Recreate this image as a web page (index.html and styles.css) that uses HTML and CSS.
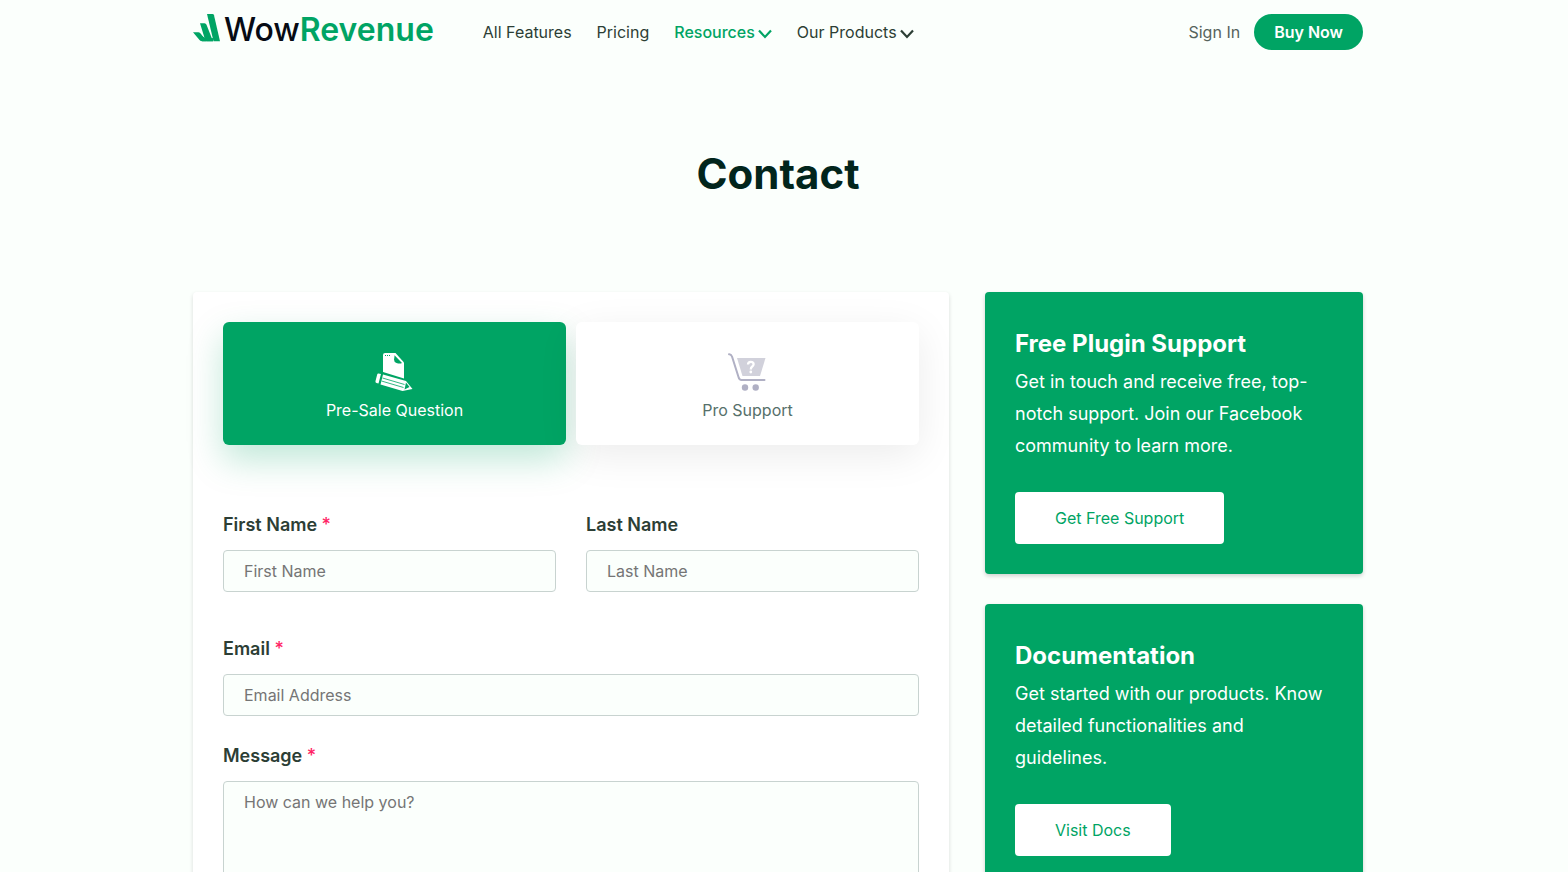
FILE: index.html
```html
<!DOCTYPE html>
<html lang="en">
<head>
  <meta charset="UTF-8" />
  <meta name="viewport" content="width=device-width, initial-scale=1.0">
  <title>Contact - WowRevenue</title>

  <link rel="stylesheet" href="styles.css">
</head>

<body>

  <header class="container header">
    <a class="logo" href="#">
      <svg class="logo-mark" width="28" height="28" viewBox="0 0 28 28" fill="#00a464" aria-hidden="true">
        <path d="M0 18.3H5.5Q7 18.4 8 20L13.5 27.3H9.5Q7.5 27.3 6.5 26Z" />
        <path d="M7 9.2H11.5Q13 9.2 13.5 10.7L20 27.3H14Q12.5 27 12 25.5Z" />
        <path d="M14 0H19.5Q20.7 0 21 1.2L27 27.3H20.5Z" />
        <path d="M9 22L14 25L20 24V27.3H9Z" />
      </svg>
      <span class="logo-text">Wow<b>Revenue</b></span>
    </a>

    <nav class="nav">
      <a href="#">All Features</a>
      <a href="#">Pricing</a>
      <a href="#" class="active">Resources
        <svg width="14" height="10" viewBox="0 0 14 10" fill="none" stroke="currentColor" stroke-width="2.2"><path d="M1 1.5L7 8L13 1.5" /></svg>
      </a>
      <a href="#">Our Products
        <svg width="14" height="10" viewBox="0 0 14 10" fill="none" stroke="currentColor" stroke-width="2.2"><path d="M1 1.5L7 8L13 1.5" /></svg>
      </a>
    </nav>

    <div class="account">
      <a href="#" class="sign-in">Sign In</a>
      <a href="#" class="buy-now">Buy Now</a>
    </div>
  </header>

  <h1>Contact</h1>

  <main class="container content">
    <section class="form-card">
      <div class="tabs">
        <button type="button" class="tab tab-active">
          <svg width="40" height="38" viewBox="0 0 40 38" aria-hidden="true">
            <path fill="#fff" d="M8 2Q8 0 10 0H20.5L29 9.5V25.5L8 19Z" />
            <path fill="#00a464" d="M19.5 3.5Q18.8 2.2 20 2.7L27 10Q25 11 21.5 10Q19 9.2 19 6.5Z" />
            <path fill="#00a464" d="M10 2h1v1h-1zM12 2h1v1h-1zM14 2h1v1h-1z" />
            <path fill="#fff" d="M3.5 20.5L6 21L3.5 30.5L1.5 30Q0 29.5 .5 28L2.2 21.5Q2.5 20.3 3.5 20.5ZM8 21.5L31 28L37.5 36L27.5 38L5.5 31.5Z" />
            <path fill="none" stroke="#00a464" stroke-width="0.8" d="M7.5 25L29.5 31.5M6.5 28L28.5 34.5" />
            <path fill="#00a464" d="M31 29.5L34.5 34L29.5 36.5Z" />
          </svg>
          <span>Pre-Sale Question</span>
        </button>
        <button type="button" class="tab">
          <svg width="40" height="38" viewBox="0 0 40 38" aria-hidden="true">
            <path fill="#d1d1db" d="M9 5H37.5L32 23H14.5Z" />
            <path fill="none" stroke="#b0b0c4" stroke-width="2" stroke-linecap="round" stroke-linejoin="round" d="M1 1.2Q3 1 4 3.5L10.5 24Q11.3 27 13.5 27H36.5" />
            <path fill="none" stroke="#fff" stroke-width="2.3" d="M20 11.5Q20 8.8 22.8 8.8Q25.6 8.8 25.6 11.2Q25.6 12.6 24 13.7Q22.8 14.5 22.8 16.5" />
            <circle cx="22.8" cy="19" r="1.4" fill="#fff" />
            <circle cx="17" cy="34.5" r="3.2" fill="#b0b0c4" />
            <circle cx="27.7" cy="34.5" r="3.2" fill="#b0b0c4" />
          </svg>
          <span>Pro Support</span>
        </button>
      </div>

      <form class="contact-form">
        <div class="name-row">
          <div class="field">
            <label for="firstName">First Name <span class="required">*</span></label>
            <input type="text" id="firstName" placeholder="First Name">
          </div>
          <div class="field">
            <label for="lastName">Last Name</label>
            <input type="text" id="lastName" placeholder="Last Name">
          </div>
        </div>
        <div class="field">
          <label for="email">Email <span class="required">*</span></label>
          <input type="email" id="email" placeholder="Email Address">
        </div>
        <div class="field">
          <label for="message">Message <span class="required">*</span></label>
          <textarea id="message" rows="6" placeholder="How can we help you?"></textarea>
        </div>
      </form>
    </section>

    <aside class="sidebar">
      <div class="help-card">
        <h2>Free Plugin Support</h2>
        <p>Get in touch and receive free, top-notch support. Join our Facebook community to learn more.</p>
        <a href="#" class="help-button">Get Free Support</a>
      </div>
      <div class="help-card">
        <h2>Documentation</h2>
        <p>Get started with our products. Know detailed functionalities and guidelines.</p>
        <a href="#" class="help-button">Visit Docs</a>
      </div>
    </aside>
  </main>

</body>
</html>
```
FILE: styles.css
```css
* {
  box-sizing: border-box;
}

body {
  background-color: #fbfffc;
  margin: 0;
  padding-right: 12px;
  font-family: Inter, "Liberation Sans", sans-serif;
  font-size: 16px;
  color: #2c3e35;
}

a {
  color: inherit;
  text-decoration: none;
}

.container {
  max-width: 1170px;
  margin: 0 auto;
}

.header {
  display: flex;
  align-items: center;
  height: 64px;
}

.logo {
  display: flex;
  align-items: center;
  gap: 3px;
  margin-right: 49px;
  padding-bottom: 8px;
}

.logo-text {
  padding-top: 4px;
  font-size: 32px;
  line-height: 40px;
  font-weight: 500;
  color: #070b14;
}

.logo-text b {
  font-weight: 600;
  color: #00a464;
}

.nav {
  display: flex;
  gap: 25px;
  line-height: 24px;
}

.nav a {
  display: flex;
  align-items: center;
  gap: 3px;
}

.nav svg {
  margin-top: 3px;
}

.nav .active {
  color: #00a464;
  font-weight: 500;
}

.account {
  display: flex;
  align-items: center;
  gap: 14px;
  margin-left: auto;
}

.sign-in {
  color: #56635c;
}

.buy-now {
  padding: 0 20px;
  line-height: 36px;
  border-radius: 18px;
  background-color: #00a464;
  color: white;
  font-weight: 600;
}

h1 {
  margin: 78px 0 86px;
  font-size: 42px;
  line-height: 64px;
  text-align: center;
  color: #02251c;
}

.content {
  display: grid;
  grid-template-columns: 2fr 1fr;
  gap: 36px;
  align-items: start;
}

.form-card {
  padding: 30px;
  border-radius: 4px;
  background-color: white;
  box-shadow: 0 2px 4px rgba(0, 0, 0, 0.14);
}

.tabs {
  display: grid;
  grid-template-columns: 1fr 1fr;
  gap: 10px;
}

.tab {
  display: flex;
  flex-direction: column;
  align-items: center;
  gap: 7px;
  height: 123px;
  padding: 31px 0 0;
  border: none;
  border-radius: 6px;
  background-color: white;
  box-shadow: 0 10px 40px rgba(0, 0, 0, 0.08);
  font: inherit;
  line-height: 24px;
  color: #56706a;
  cursor: pointer;
}

.tab-active {
  background-color: #00a464;
  box-shadow: 0 15px 35px rgba(0, 164, 100, 0.25);
  color: white;
}

.contact-form {
  margin-top: 63px;
}

.name-row {
  display: grid;
  grid-template-columns: 1fr 1fr;
  gap: 30px;
  margin-bottom: 40px;
}

.field {
  display: flex;
  flex-direction: column;
  gap: 8px;
}

.contact-form > .field {
  margin-bottom: 23px;
}

label {
  font-size: 18px;
  line-height: 34px;
  font-weight: 600;
}

.required {
  color: #ff2465;
  font-weight: 500;
}

input,
textarea {
  width: 100%;
  padding: 8px 20px;
  border: 1px solid #c8d3d0;
  border-radius: 4px;
  background-color: #fbfffc;
  font: inherit;
  line-height: 24px;
  color: inherit;
}

input {
  height: 42px;
}

textarea {
  resize: vertical;
}

::placeholder {
  color: #757575;
}

.sidebar {
  display: grid;
  gap: 30px;
}

.help-card {
  padding: 30px;
  border-radius: 4px;
  background-color: #00a464;
  box-shadow: 0 2px 4px rgba(0, 0, 0, 0.18);
  color: white;
}

.help-card h2 {
  margin: 0;
  font-size: 24px;
  line-height: 44px;
}

.help-card p {
  margin: 0 0 30px;
  font-size: 18px;
  line-height: 32px;
}

.help-button {
  display: inline-block;
  vertical-align: top;
  padding: 0 40px;
  line-height: 52px;
  border-radius: 4px;
  background-color: white;
  color: #00a464;
}
```
